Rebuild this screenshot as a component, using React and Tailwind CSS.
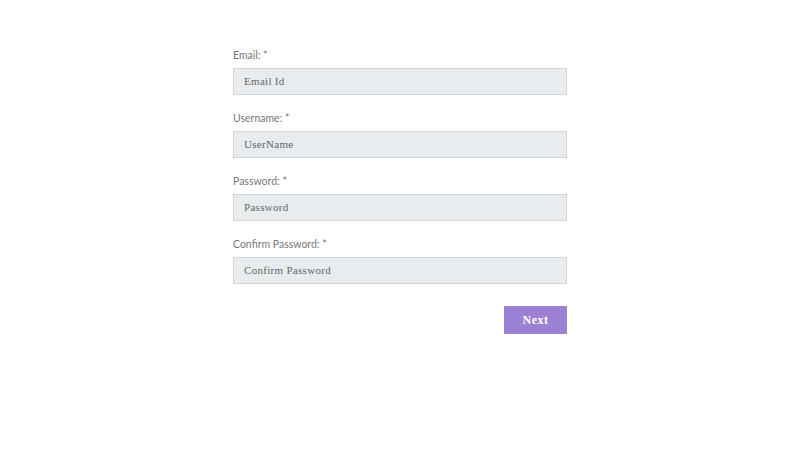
export default function App() {
  const fields = [
    ["Email: *", "Email Id"],
    ["Username: *", "UserName"],
    ["Password: *", "Password"],
    ["Confirm Password: *", "Confirm Password"],
  ];
  return (
    <div className="w-[800px] h-[450px] bg-white">
      <div className="w-[334px] mx-auto pt-[48px] flex flex-col">
        {fields.map(([label, ph], i) => (
          <div key={i} className="flex flex-col mb-[16px]">
            <div className="text-[10.5px] leading-[14px] text-[#777] mb-[6px]" style={{ fontFamily: 'Lato, sans-serif' }}>
              {label}
            </div>
            <div
              className="h-[27px] bg-[#e8ecef] border border-[#cfd4d8] flex items-center pl-[10px] text-[11px] tracking-[0.3px] text-[#666]"
              style={{ fontFamily: '"Liberation Serif", serif' }}
            >
              {ph}
            </div>
          </div>
        ))}
        <div className="flex justify-end mt-[6px]">
          <div
            className="w-[63px] h-[28px] bg-[#9b80d3] text-white font-bold text-[12px] tracking-[0.5px] flex items-center justify-center"
            style={{ fontFamily: '"Liberation Serif", serif' }}
          >
            Next
          </div>
        </div>
      </div>
    </div>
  );
}
